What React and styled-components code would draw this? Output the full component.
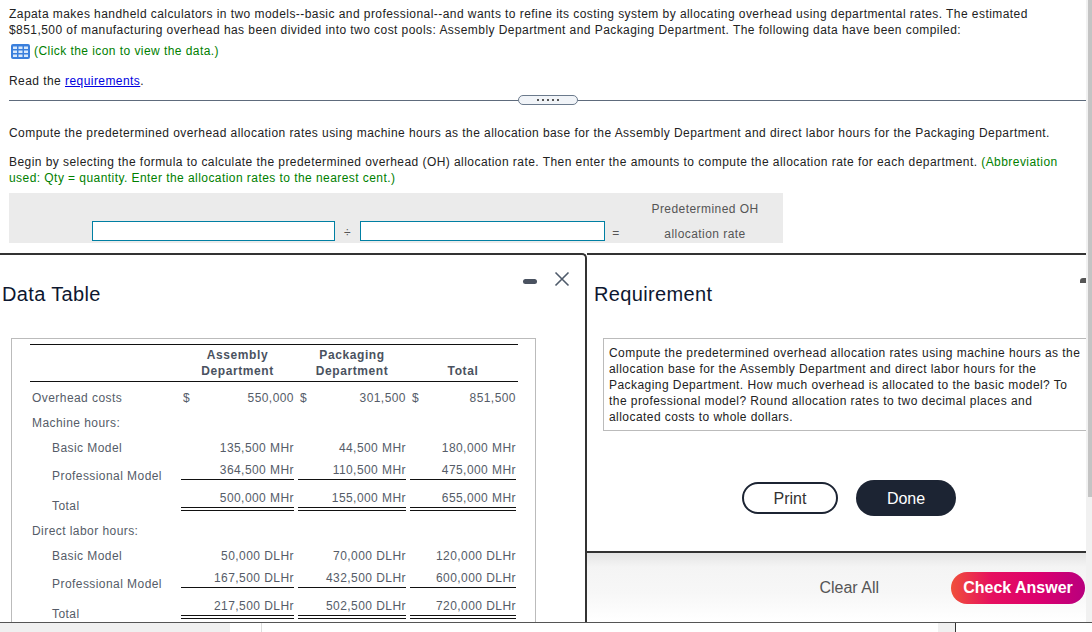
import React from 'react'
import styled, { createGlobalStyle } from 'styled-components'

const GlobalStyle = createGlobalStyle`
  html, body {
    margin: 0;
    padding: 0;
    background: #fff;
    overflow: hidden;
  }
  * {
    box-sizing: border-box;
  }
`

const Page = styled.div`
  width: 1092px;
  height: 632px;
  display: flex;
  flex-direction: column;
  overflow: hidden;
  font-family: "Liberation Sans", Arial, sans-serif;
  font-size: 12px;
  line-height: 16px;
  letter-spacing: 0.44px;
  color: #222;
`

const Body = styled.div`
  display: flex;
  height: 622px;
`

const Main = styled.div`
  width: 1086px;
  display: flex;
  flex-direction: column;
`

const ScrollRail = styled.div`
  width: 6px;
  padding-left: 2px;
  background: #f1f1f1;
`

const ScrollThumb = styled.div`
  height: 497px;
  background: #c4c4c4;
`

const Question = styled.div`
  height: 253px;
  padding: 6px 0 0 9px;
`

const Para = styled.p`
  margin: ${({ $top }) => $top || 0}px 0 0;
  white-space: nowrap;
`

const Green = styled.span`
  color: green;
`

const Link = styled.a`
  color: #0000e0;
  text-decoration: underline;
`

const DataRow = styled.div`
  display: flex;
  align-items: center;
  gap: 4px;
  margin: 5px 0 0 2px;
  color: green;
`

const Divider = styled.div`
  display: flex;
  align-items: center;
  height: 10px;
  margin: 6px 0 0 0;
  &::before, &::after {
    content: '';
    height: 1px;
    background: #5e6b7c;
  }
  &::before {
    width: 509px;
  }
  &::after {
    flex: 1;
  }
`

const Grip = styled.div`
  width: 60px;
  height: 10px;
  display: flex;
  align-items: center;
  justify-content: center;
  gap: 3px;
  border: 1px solid #6b7a8c;
  border-radius: 5px;
  background: #f1f4f8;
`

const GripDot = styled.span`
  width: 2px;
  height: 2px;
  background: #555;
`

const FormulaBar = styled.div`
  width: 774px;
  height: 50px;
  margin-top: 7px;
  padding: 0 0 2px 83px;
  display: flex;
  align-items: flex-end;
  background: #ebebeb;
`

const FormulaInput = styled.input`
  width: ${({ $width }) => $width}px;
  height: 20px;
  padding: 0 4px;
  background: #fff;
  border: 1px solid #007fa3;
  outline: none;
`

const Operator = styled.span`
  width: ${({ $width }) => $width}px;
  text-align: center;
  color: #555;
`

const ResultLabel = styled.div`
  flex: 1;
  align-self: flex-start;
  margin-top: 4px;
  text-align: center;
  color: #555;
  line-height: 25px;
  white-space: nowrap;
`

const Windows = styled.div`
  flex: 1;
  display: flex;
  min-height: 0;
`

const DataWindow = styled.section`
  width: 587px;
  height: 369px;
  overflow: hidden;
  background: #fff;
  border-top: 2px solid #333;
  border-right: 2px solid #333;
  border-top-right-radius: 5px;
`

const WindowHead = styled.div`
  height: 83px;
  padding: 26px 0 0 2px;
  display: flex;
  align-items: flex-start;
  justify-content: space-between;
`

const WindowTitle = styled.h2`
  margin: 0;
  font-size: 20px;
  line-height: 26px;
  font-weight: 400;
  letter-spacing: 0.35px;
  color: #0d1730;
`

const WindowControls = styled.div`
  display: flex;
  align-items: flex-start;
  gap: 17px;
  margin: -10px 15px 0 0;
`

const MinimizeIcon = styled.span`
  width: 14px;
  height: 5px;
  margin-top: 8px;
  border-radius: 2.5px;
  background: #4a5260;
`

const DataFrame = styled.div`
  width: 525px;
  height: 300px;
  margin-left: 11px;
  padding: 5px 0 0 18px;
  border: 1px solid #bbb;
`

const DataGrid = styled.div`
  width: 488px;
  color: #555c68;
  border-top: 1px solid #111;
`

const Row = styled.div`
  display: grid;
  grid-template-columns: 151px 113px 4px 108px 4px 106px 2px;
  height: ${({ $height }) => $height}px;
`

const HeaderRow = styled(Row)`
  height: 37px;
  margin-bottom: 3px;
  border-bottom: 1px solid #111;
`

const HeadCell = styled.div`
  align-self: end;
  padding-bottom: 2px;
  text-align: center;
  font-weight: 700;
  letter-spacing: 0.6px;
  color: #4a5260;
`

const Label = styled.div`
  display: flex;
  align-items: ${({ $bottom }) => ($bottom ? 'flex-end' : 'center')};
  padding-left: ${({ $indent }) => ($indent ? 22 : 2)}px;
  padding-bottom: ${({ $pad }) => $pad || 0}px;
  white-space: nowrap;
`

const Value = styled.div`
  display: flex;
  align-items: ${({ $rule }) => ($rule ? 'flex-end' : 'center')};
  justify-content: space-between;
  align-self: start;
  height: ${({ $rule }) => ($rule === 'double' ? 27 : $rule ? 20 : 25)}px;
  padding: 0 0 ${({ $rule }) => ($rule ? 1 : 0)}px 0;
  border-bottom: ${({ $rule }) => ($rule === 'double' ? '4px double #111' : $rule ? '1px solid #111' : '0')};
  white-space: nowrap;
`

const Currency = styled.span`
  padding-left: 2px;
`

const Amount = styled.span`
  margin-left: auto;
`

const RightColumn = styled.div`
  flex: 1;
  display: flex;
  flex-direction: column;
  min-width: 0;
`

const RequirementWindow = styled.section`
  height: 300px;
  background: #fff;
  border-top: 2px solid #333;
  border-bottom: 2px solid #333;
`

const RequirementHead = styled(WindowHead)`
  padding-left: 7px;
  position: relative;
`

const Blob = styled.span`
  position: absolute;
  right: 0;
  top: 23px;
  width: 6px;
  height: 5px;
  border-top-left-radius: 3px;
  background: #555;
`

const RequirementBox = styled.div`
  margin-left: 16px;
  height: 93px;
  padding: 6px 0 0 5px;
  border: 1px solid #bbb;
  border-right: 0;
  white-space: nowrap;
`

const ButtonRow = styled.div`
  display: flex;
  align-items: center;
  gap: 18px;
  margin: 49px 0 0 155px;
`

const PrintButton = styled.button`
  width: 96px;
  height: 32px;
  padding: 1px 0 0;
  border: 2px solid #1c2433;
  border-radius: 16px;
  background: #fff;
  color: #333;
  font: 16px "Liberation Sans", Arial, sans-serif;
`

const DoneButton = styled.button`
  width: 100px;
  height: 36px;
  padding: 1px 0 0;
  border: 0;
  border-radius: 18px;
  background: #1c2433;
  color: #fff;
  font: 16px "Liberation Sans", Arial, sans-serif;
`

const Footer = styled.div`
  flex: 1;
  display: flex;
  align-items: center;
  justify-content: flex-end;
  gap: 72px;
  padding-right: 1px;
  background: linear-gradient(#e4e4e4 0, #f4f4f4 14px, #f7f7f7 40px, #fff 68px);
`

const ClearButton = styled.button`
  border: 0;
  padding: 0;
  background: none;
  color: #555;
  font: 16px "Liberation Sans", Arial, sans-serif;
`

const CheckButton = styled.button`
  width: 134px;
  height: 32px;
  border: 0;
  border-radius: 16px;
  background: linear-gradient(90deg, #f0503a 0, #e6105f 30%, #dc006e 65%, #b8007e 100%);
  color: #fff;
  font: 700 16px "Liberation Sans", Arial, sans-serif;
`

const StatusStrip = styled.div`
  height: 10px;
  display: flex;
  background: #fff;
  border-top: 1px solid #555;
`

const StripCell = styled.div`
  width: ${({ $width }) => $width}px;
  flex: ${({ $width }) => ($width ? 'none' : 1)};
  background: ${({ $shade }) => ($shade ? '#f0f0f0' : '#fff')};
  border-right: ${({ $edge }) => ($edge ? `1px solid ${$edge}` : '0')};
`

const TableIcon = () => (
  <svg width="19" height="15" viewBox="0 0 19 15">
    <rect width="19" height="15" rx="2" fill="#3a7fdc" />
    <g fill="#d9e9fb">
      {[2.5, 6.5, 10.5].map((y) =>
        [2, 7.5, 13].map((x) => <rect key={`${x}-${y}`} x={x} y={y} width="4" height="2.5" />)
      )}
    </g>
  </svg>
)

const CloseIcon = () => (
  <svg width="16" height="16" viewBox="0 0 16 16">
    <path d="M1.5 1.5 L14.5 14.5 M14.5 1.5 L1.5 14.5" stroke="#4f5b6b" strokeWidth="1.6" fill="none" />
  </svg>
)

const MoneyRow = ({ label, values }) => (
  <Row $height={25}>
    <Label>{label}</Label>
    {values.map((value) => (
      <React.Fragment key={value}>
        <Value>
          <Currency>$</Currency>
          <Amount>{value}</Amount>
        </Value>
        <span />
      </React.Fragment>
    ))}
  </Row>
)

const HoursRow = ({ label, values, rule, height, bottom, pad }) => (
  <Row $height={height || 25}>
    <Label $indent $bottom={bottom} $pad={pad}>{label}</Label>
    {values.map((value) => (
      <React.Fragment key={value}>
        <Value $rule={rule}>
          <Amount>{value}</Amount>
        </Value>
        <span />
      </React.Fragment>
    ))}
  </Row>
)

const SectionRow = ({ children }) => (
  <Row $height={25}>
    <Label>{children}</Label>
  </Row>
)

export default function App() {
  return (
    <Page>
      <GlobalStyle />
      <Body>
        <Main>
          <Question>
            <Para>
              Zapata makes handheld calculators in two models--basic and professional--and wants to refine its costing system by allocating overhead using departmental rates. The estimated
              <br />
              $851,500 of manufacturing overhead has been divided into two cost pools: Assembly Department and Packaging Department. The following data have been compiled:
            </Para>
            <DataRow>
              <TableIcon />
              <span>(Click the icon to view the data.)</span>
            </DataRow>
            <Para $top={14}>
              Read the <Link href="#">requirements</Link>.
            </Para>
            <Divider>
              <Grip>
                {[0, 1, 2, 3, 4].map((i) => <GripDot key={i} />)}
              </Grip>
            </Divider>
            <Para $top={20}>
              Compute the predetermined overhead allocation rates using machine hours as the allocation base for the Assembly Department and direct labor hours for the Packaging Department.
            </Para>
            <Para $top={13}>
              Begin by selecting the formula to calculate the predetermined overhead (OH) allocation rate. Then enter the amounts to compute the allocation rate for each department.{' '}
              <Green>
                (Abbreviation
                <br />
                used: Qty = quantity. Enter the allocation rates to the nearest cent.)
              </Green>
            </Para>
            <FormulaBar>
              <FormulaInput $width={243} />
              <Operator $width={25}>÷</Operator>
              <FormulaInput $width={245} />
              <Operator $width={22}>=</Operator>
              <ResultLabel>
                Predetermined OH
                <br />
                allocation rate
              </ResultLabel>
            </FormulaBar>
          </Question>
          <Windows>
            <DataWindow>
              <WindowHead>
                <WindowTitle>Data Table</WindowTitle>
                <WindowControls>
                  <MinimizeIcon />
                  <CloseIcon />
                </WindowControls>
              </WindowHead>
              <DataFrame>
                <DataGrid>
                  <HeaderRow>
                    <span />
                    <HeadCell>Assembly<br />Department</HeadCell>
                    <span />
                    <HeadCell>Packaging<br />Department</HeadCell>
                    <span />
                    <HeadCell>Total</HeadCell>
                    <span />
                  </HeaderRow>
                  <MoneyRow label="Overhead costs" values={['550,000', '301,500', '851,500']} />
                  <SectionRow>Machine hours:</SectionRow>
                  <HoursRow label="Basic Model" values={['135,500 MHr', '44,500 MHr', '180,000 MHr']} />
                  <HoursRow label="Professional Model" values={['364,500 MHr', '110,500 MHr', '475,000 MHr']} rule="single" height={24} bottom />
                  <HoursRow label="Total" values={['500,000 MHr', '155,000 MHr', '655,000 MHr']} rule="double" height={34} bottom pad={4} />
                  <SectionRow>Direct labor hours:</SectionRow>
                  <HoursRow label="Basic Model" values={['50,000 DLHr', '70,000 DLHr', '120,000 DLHr']} />
                  <HoursRow label="Professional Model" values={['167,500 DLHr', '432,500 DLHr', '600,000 DLHr']} rule="single" height={24} bottom />
                  <HoursRow label="Total" values={['217,500 DLHr', '502,500 DLHr', '720,000 DLHr']} rule="double" height={34} bottom pad={4} />
                </DataGrid>
              </DataFrame>
            </DataWindow>
            <RightColumn>
              <RequirementWindow>
                <RequirementHead>
                  <WindowTitle>Requirement</WindowTitle>
                  <Blob />
                </RequirementHead>
                <RequirementBox>
                  Compute the predetermined overhead allocation rates using machine hours as the
                  <br />
                  allocation base for the Assembly Department and direct labor hours for the
                  <br />
                  Packaging Department. How much overhead is allocated to the basic model? To
                  <br />
                  the professional model? Round allocation rates to two decimal places and
                  <br />
                  allocated costs to whole dollars.
                </RequirementBox>
                <ButtonRow>
                  <PrintButton>Print</PrintButton>
                  <DoneButton>Done</DoneButton>
                </ButtonRow>
              </RequirementWindow>
              <Footer>
                <ClearButton>Clear All</ClearButton>
                <CheckButton>Check Answer</CheckButton>
              </Footer>
            </RightColumn>
          </Windows>
        </Main>
        <ScrollRail>
          <ScrollThumb />
        </ScrollRail>
      </Body>
      <StatusStrip>
        <StripCell $width={230} $shade />
        <StripCell $width={32} $edge="#ddd" />
        <StripCell $width={676} />
        <StripCell $width={18} $shade $edge="#333" />
        <StripCell />
      </StatusStrip>
    </Page>
  )
}
